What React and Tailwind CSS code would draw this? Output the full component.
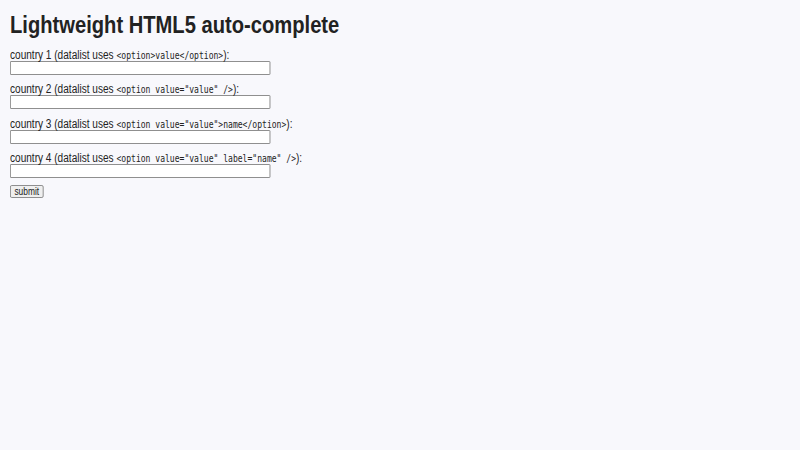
import React, { useState } from "react";

const fields = [
  { id: "country1", label: "country 1", code: "<option>value</option>" },
  { id: "country2", label: "country 2", code: '<option value="value" />' },
  { id: "country3", label: "country 3", code: '<option value="value">name</option>' },
  { id: "country4", label: "country 4", code: '<option value="value" label="name" />' },
];

const App = () => {
  const [values, setValues] = useState({});

  return (
    <div className="min-h-screen bg-[#f8f8fc] text-[#222] px-[10px] pt-[11px] font-['Liberation_Sans',Arial,sans-serif]">
      {/* the page text is set a bit condensed */}
      <div className="origin-top-left scale-x-[0.84]">
        <h1 className="text-[24px] font-bold leading-[28px] mb-[9px]">
          Lightweight HTML5 auto-complete
        </h1>

        <form onSubmit={(e) => e.preventDefault()}>
          {fields.map((f) => (
            <div key={f.id} className="mb-[7.33px]">
              <label htmlFor={f.id} className="block h-[13px] text-[12px] leading-[15px] whitespace-nowrap">
                {f.label} (datalist uses{" "}
                <code className="text-[9.6px] font-['DejaVu_Sans_Mono',monospace]">{f.code}</code>):
              </label>
              <input
                id={f.id}
                type="text"
                value={values[f.id] || ""}
                onChange={(e) => setValues({ ...values, [f.id]: e.target.value })}
                className="block w-[310px] h-[14px] bg-white border border-[#858585] rounded-[1px] text-[10px] px-1"
              />
            </div>
          ))}
          <button
            type="submit"
            className="block h-[13px] w-[40px] text-[10px] leading-[11px] bg-[#efefef] border border-[#858585] rounded-[2px]"
          >
            submit
          </button>
        </form>
      </div>
    </div>
  );
};

export default App;
